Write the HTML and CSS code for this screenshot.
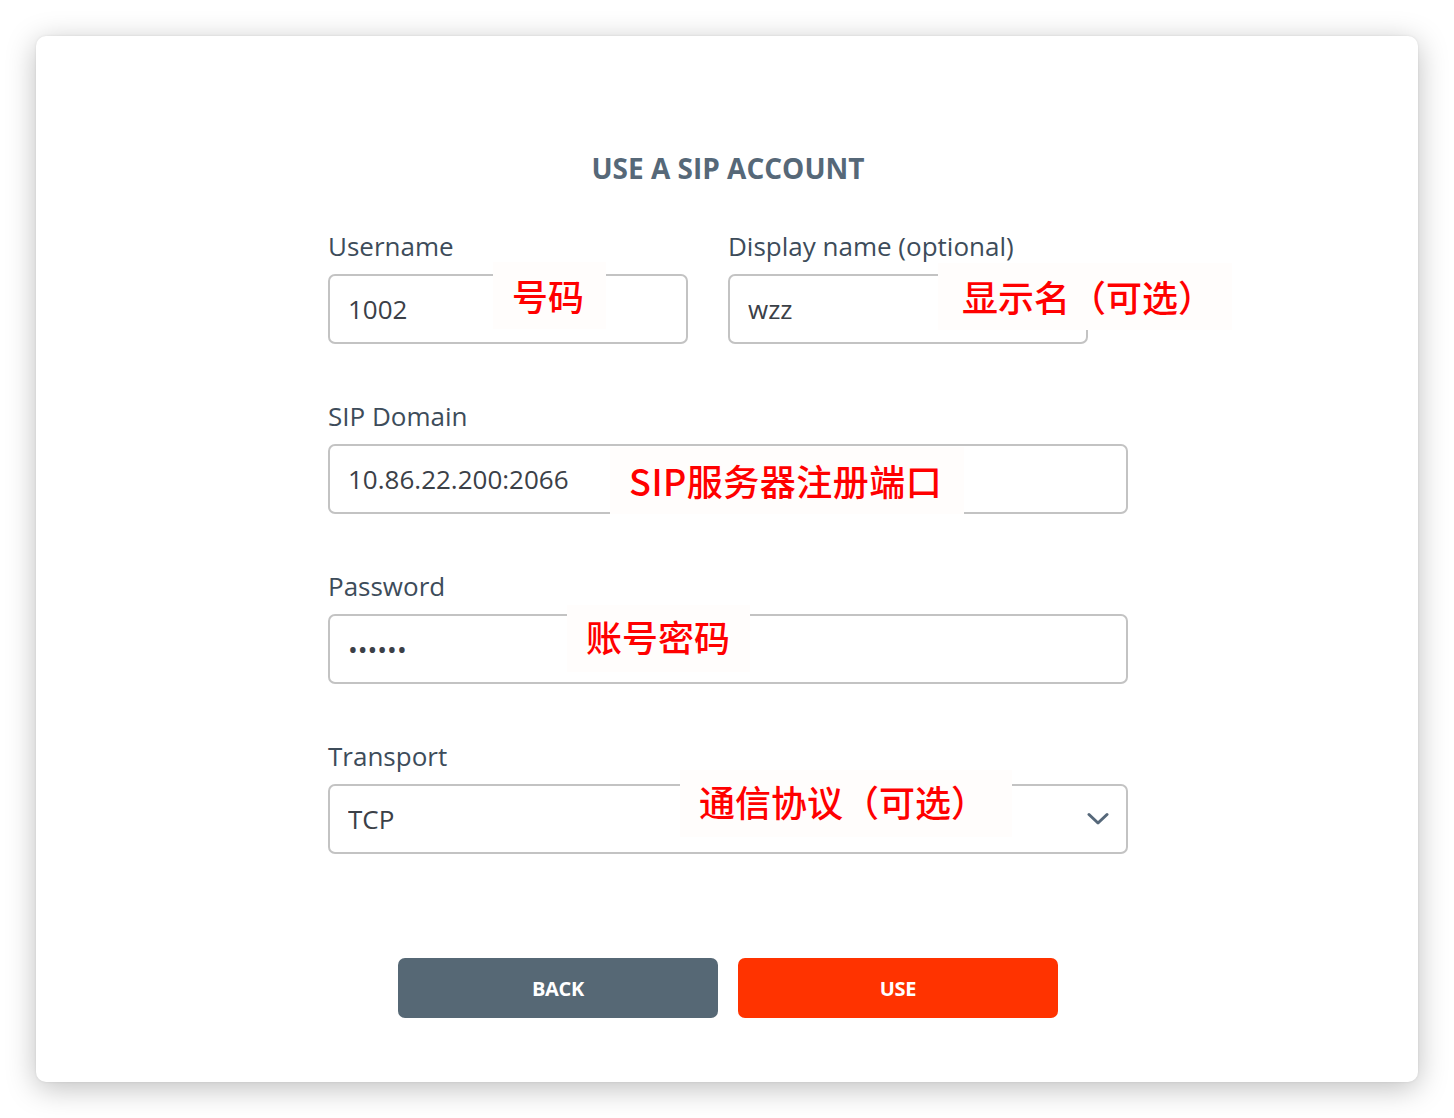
FILE: index.html
```html
<!DOCTYPE html>
<html lang="en">
<head>
<meta charset="utf-8">
<title>Use a SIP account</title>
<link rel="stylesheet" href="styles.css">
</head>
<body>
<div class="card">
  <form class="form">
    <h1 class="title">USE A SIP ACCOUNT</h1>
    <div class="row">
      <div class="group">
        <label class="label">Username</label>
        <input class="field" type="text" value="1002">
      </div>
      <div class="group">
        <label class="label">Display name (optional)</label>
        <input class="field" type="text" value="wzz">
      </div>
    </div>
    <div class="group">
      <label class="label">SIP Domain</label>
      <input class="field" type="text" value="10.86.22.200:2066">
    </div>
    <div class="group">
      <label class="label">Password</label>
      <input class="field" type="password" value="123456">
    </div>
    <div class="group">
      <label class="label">Transport</label>
      <div class="select-wrap">
        <select class="field select">
          <option>TCP</option>
          <option>UDP</option>
          <option>TLS</option>
        </select>
        <svg class="chevron" width="22" height="14" viewBox="0 0 22 14"><path d="M2 2.5 L11 11 L20 2.5" fill="none" stroke="#56687a" stroke-width="3" stroke-linecap="round" stroke-linejoin="round"/></svg>
      </div>
    </div>
    <div class="actions">
      <button type="button" class="btn btn-back">BACK</button>
      <button type="button" class="btn btn-use">USE</button>
    </div>
  </form>

  <div class="note note-user">号码</div>
  <div class="note note-display">显示名（可选）</div>
  <div class="note note-domain">SIP服务器注册端口</div>
  <div class="note note-pass">账号密码</div>
  <div class="note note-transport">通信协议（可选）</div>
</div>
</body>
</html>
```

FILE: styles.css
```css
html, body {
  margin: 0;
  padding: 0;
  background: #ffffff;
}

body {
  font-family: "Open Sans", "Noto Sans", "Liberation Sans", sans-serif;
  width: 1454px;
  height: 1118px;
  overflow: hidden;
}

.card {
  position: relative;
  box-sizing: border-box;
  margin: 36px;
  width: 1382px;
  height: 1046px;
  padding-top: 114px;
  background: #ffffff;
  border-radius: 10px;
  box-shadow: 0 6px 30px rgba(0, 0, 0, 0.26), 0 0 3px rgba(0, 0, 0, 0.08);
}

.title {
  margin: 0;
  font-size: 28px;
  line-height: 36px;
  font-weight: 700;
  color: #566878;
  text-align: center;
}

.form {
  width: 800px;
  margin: 0 0 0 292px;
  display: flex;
  flex-direction: column;
}

.row {
  display: grid;
  grid-template-columns: 360px 360px;
  column-gap: 40px;
  margin-top: 42px;
}

.row .group {
  margin-top: 0;
}

.group {
  display: flex;
  flex-direction: column;
  margin-top: 54px;
}

.label {
  font-size: 26px;
  line-height: 36px;
  color: #3d4c5a;
  margin-bottom: 10px;
}

.field {
  box-sizing: border-box;
  width: 100%;
  height: 70px;
  margin: 0;
  padding: 0 18px;
  border: 2px solid #c3c3c3;
  border-radius: 7px;
  background: #ffffff;
  font-family: "Open Sans", "Noto Sans", "Liberation Sans", sans-serif;
  font-size: 26px;
  color: #3b4047;
  outline: none;
}

.select-wrap {
  position: relative;
}

.select {
  -webkit-appearance: none;
  appearance: none;
  cursor: pointer;
}

.chevron {
  position: absolute;
  right: 19px;
  top: 28px;
  pointer-events: none;
}

.actions {
  display: flex;
  justify-content: center;
  gap: 20px;
  margin-top: 104px;
}

.btn {
  width: 320px;
  height: 60px;
  border: none;
  border-radius: 7px;
  font-family: "Open Sans", "Noto Sans", "Liberation Sans", sans-serif;
  font-size: 20px;
  font-weight: 700;
  color: #ffffff;
  cursor: pointer;
  letter-spacing: -0.3px;
}

.btn-back {
  background: #566875;
}

.btn-use {
  background: #ff3300;
}

.note {
  position: absolute;
  padding: 15px 20px 16px 19px;
  font-family: "Noto Sans CJK SC", "Noto Sans", sans-serif;
  font-size: 36px;
  font-weight: 500;
  line-height: 36px;
  color: #ff0000;
  background: #fffdfc;
  white-space: nowrap;
}

.note-user {
  left: 457px;
  top: 226px;
  width: 74px;
}

.note-display {
  left: 902px;
  top: 227px;
  padding-left: 24px;
  padding-right: 18px;
}

.note-domain {
  left: 574px;
  top: 411px;
  padding-right: 22px;
  letter-spacing: 0.5px;
}

.note-pass {
  left: 531px;
  top: 569px;
  padding-top: 13px;
  padding-bottom: 18px;
}

.note-transport {
  left: 644px;
  top: 734px;
  padding-top: 13px;
  padding-bottom: 18px;
  padding-right: 25px;
}
```
